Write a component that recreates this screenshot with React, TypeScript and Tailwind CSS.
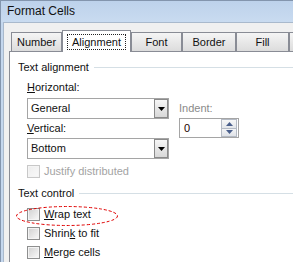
import { FC, ReactNode } from "react";

const Check: FC<{ disabled?: boolean }> = ({ disabled }) => (
  <div
    className={
      "w-[13px] h-[13px] shrink-0 border p-px bg-[#f4f4f4] " +
      (disabled ? "border-[#c8c8c8]" : "border-[#8e8f8f]")
    }
  >
    <div
      className={
        "w-full h-full bg-gradient-to-br " +
        (disabled ? "from-[#eeeeee] to-[#f8f8f8]" : "from-[#d4d4d4] to-[#f6f6f6]")
      }
    />
  </div>
);

const CheckRow: FC<{ children: ReactNode; disabled?: boolean; className?: string }> = ({
  children,
  disabled,
  className,
}) => (
  <div className={"flex items-center h-[13px] " + (className ?? "")}>
    <Check disabled={disabled} />
    <span className={"ml-[4px] " + (disabled ? "text-[#a3a3a3]" : "")}>{children}</span>
  </div>
);

const GroupHeader: FC<{ label: string; className?: string }> = ({ label, className }) => (
  <div className={"flex items-center h-[13px] pl-[8px] " + (className ?? "")}>
    <span>{label}</span>
    <div className="flex-1 h-px bg-[#d5dfe5] ml-[5px]" />
  </div>
);

const DropButton = () => (
  <div className="w-[14px] h-full border border-[#8a8a8a] bg-gradient-to-b from-[#f6f6f6] to-[#d8d8d8] flex items-center justify-center">
    <svg width="7" height="4" viewBox="0 0 7 4">
      <path d="M0 0h7L3.5 4z" fill="#000" />
    </svg>
  </div>
);

const Combo: FC<{ value: string; className?: string }> = ({ value, className }) => (
  <div
    className={
      "w-[142px] h-[21px] border border-[#a5a5a5] bg-white flex items-center justify-between " +
      (className ?? "")
    }
  >
    <span className="pl-[3px]">{value}</span>
    <DropButton />
  </div>
);

const tabs = [
  { label: "Number", w: "w-[51px]" },
  { label: "Alignment", w: "w-[69px]", active: true },
  { label: "Font", w: "w-[51px]" },
  { label: "Border", w: "w-[54px]" },
  { label: "Fill", w: "w-[53px]" },
  { label: "", w: "w-[70px]" },
];

export default function App() {
  return (
    <div className="relative w-[293px] h-[262px] overflow-hidden bg-[#c4d7ee] border-l border-t border-[#8395ad] font-[family-name:Liberation_Sans,Arial,sans-serif] text-[11px] leading-[13px] text-[#111]">
      <div className="h-[21px] flex items-center pl-[6px] text-[12px] bg-gradient-to-b from-[#bdd2eb] to-[#c9dbf0]">
        Format Cells
      </div>
      <div className="ml-[2px] w-[360px] h-[260px] bg-[#f0f0f0] border-l border-t border-[#a9b9cc] pl-[5px] pt-[7px]">
        <div className="flex items-end h-[21px] ml-[2px]">
          {tabs.map((t, i) =>
            t.active ? (
              <div
                key={i}
                className={`${t.w} relative z-10 h-[22px] -mb-px bg-white border-l border-t border-r border-[#898c95] flex items-center justify-center`}
              >
                <span className="px-[4px] leading-[14px] border border-dotted border-[#222]">
                  {t.label}
                </span>
              </div>
            ) : (
              <div
                key={i}
                className={`${t.w} h-[19px] bg-gradient-to-b from-[#f5f5f5] to-[#dcdcdc] border-l border-t border-r border-[#898c95] flex items-center justify-center`}
              >
                {t.label}
              </div>
            )
          )}
        </div>
        <div className="h-[220px] bg-white border border-[#898c95] pt-[9px]">
          <GroupHeader label="Text alignment" />
          <div className="flex pl-[17px] mt-[7px]">
            <div className="flex flex-col">
              <span>
                <u>H</u>orizontal:
              </span>
              <Combo value="General" className="mt-[4px]" />
              <span className="mt-[3px]">
                <u>V</u>ertical:
              </span>
              <Combo value="Bottom" className="mt-[3px]" />
              <CheckRow disabled className="mt-[6px]">
                Justify distributed
              </CheckRow>
            </div>
            <div className="flex flex-col ml-[10px] pt-[21px]">
              <span className="text-[#8a8a8a]">Indent:</span>
              <div className="mt-[3px] w-[60px] h-[20px] border border-[#a5a5a5] bg-white flex items-center justify-between">
                <span className="pl-[4px] text-[#200]">0</span>
                <div className="flex flex-col w-[16px] h-full mr-px">
                  <div className="flex-1 border border-[#b4bac4] bg-gradient-to-b from-[#f7f7f7] to-[#e3e6ea] flex items-center justify-center">
                    <svg width="7" height="4" viewBox="0 0 7 4">
                      <path d="M0 4h7L3.5 0z" fill="#4a5f8c" />
                    </svg>
                  </div>
                  <div className="flex-1 border border-t-0 border-[#b4bac4] bg-gradient-to-b from-[#f3f4f6] to-[#e0e3e8] flex items-center justify-center">
                    <svg width="7" height="4" viewBox="0 0 7 4">
                      <path d="M0 0h7L3.5 4z" fill="#4a5f8c" />
                    </svg>
                  </div>
                </div>
              </div>
            </div>
          </div>
          <GroupHeader label="Text control" className="mt-[9px]" />
          <div className="flex flex-col pl-[17px]">
            <CheckRow className="mt-[8px]">
              <u>W</u>rap text
            </CheckRow>
            <CheckRow className="mt-[6px]">
              Shrin<u>k</u> to fit
            </CheckRow>
            <CheckRow className="mt-[6px]">
              <u>M</u>erge cells
            </CheckRow>
          </div>
        </div>
      </div>
      <svg
        className="absolute left-[14px] top-[204px]"
        width="104"
        height="22"
        viewBox="0 0 104 22"
      >
        <ellipse
          cx="52"
          cy="11"
          rx="50.5"
          ry="9.5"
          fill="none"
          stroke="#e00000"
          strokeWidth="1"
          strokeDasharray="3 2"
        />
      </svg>
    </div>
  );
}
